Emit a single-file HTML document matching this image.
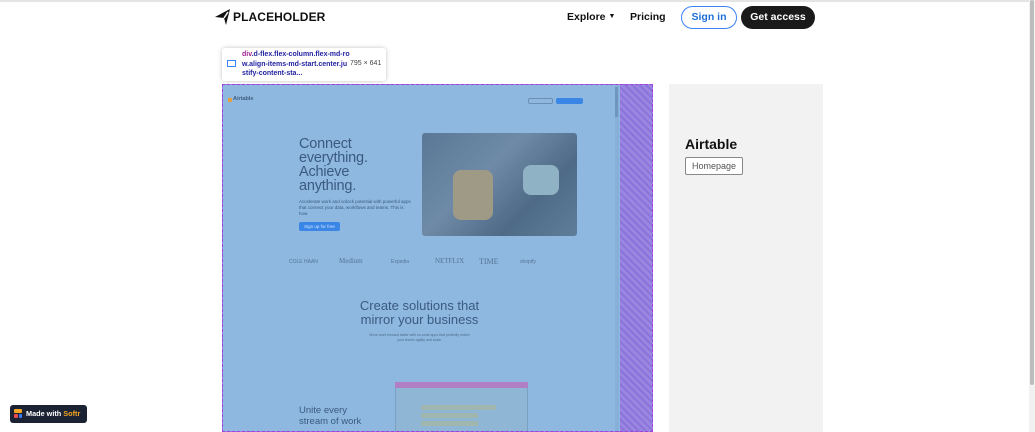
<!DOCTYPE html>
<html><head><meta charset="utf-8"><style>
*{margin:0;padding:0;box-sizing:border-box}
body{width:1035px;height:432px;overflow:hidden;background:#fff;font-family:"Liberation Sans",sans-serif;position:relative}
.abs{position:absolute}
</style></head><body>
<div class="abs" style="left:0;top:0;width:1035px;height:2px;background:#e4e4e4"></div>
<div class="abs" style="left:1029px;top:0;width:6px;height:432px;background:#f1f1f1"></div>
<div class="abs" style="left:1030px;top:0;width:4px;height:385px;background:#bdbdbd;border-radius:2px"></div>
<svg class="abs" style="left:214px;top:8px" width="18" height="18" viewBox="0 0 18 18"><path d="M16 1 L1 9 L10 10 L12 17 Z" fill="#111"/><path d="M10 10 L14 4" stroke="#fff" stroke-width="1.5"/></svg>
<div class="abs" style="left:233px;top:10px;font-size:12px;font-weight:bold;letter-spacing:0.1px;color:#111">PLACEHOLDER</div>
<div class="abs" style="left:567px;top:11px;font-size:10.5px;font-weight:bold;color:#111">Explore <span style="font-size:7px;vertical-align:2px">&#9660;</span></div>
<div class="abs" style="left:630px;top:11px;font-size:10.5px;font-weight:bold;color:#111">Pricing</div>
<div class="abs" style="left:681px;top:6px;width:56px;height:23px;border:1px solid #3b82f6;border-radius:12px;color:#1d6fd8;font-size:10.5px;font-weight:bold;text-align:center;line-height:21px">Sign in</div>
<div class="abs" style="left:741px;top:6px;width:74px;height:23px;background:#1a1a1a;border-radius:12px;color:#fff;font-size:10.5px;font-weight:bold;text-align:center;line-height:23px">Get access</div>
<div class="abs" style="left:222px;top:48px;width:164px;height:33px;background:#fff;border-radius:3px;box-shadow:0 0 4px rgba(0,0,0,.25)"></div>
<div class="abs" style="left:227px;top:60px;width:9px;height:7px;border:1px solid #3b82f6"></div>
<div class="abs" style="left:242px;top:50px;width:108px;font-size:7px;font-weight:bold;line-height:9.5px;color:#2323a0;word-break:break-all"><span style="color:#a0208f">div</span>.d-flex.flex-column.flex-md-row.align-items-md-start.center.justify-content-sta...</div>
<div class="abs" style="left:350px;top:60px;font-size:7px;color:#444">795 × 641</div>
<div class="abs" style="left:222px;top:84px;width:431px;height:348px;background:repeating-linear-gradient(45deg,#9a86e0 0 3px,#8a73da 3px 5px);border:1px dashed #a040e0;overflow:hidden">
 <div class="abs" style="left:0;top:0;width:397px;height:348px;background:#8eb8e0"></div>
 <div class="abs" style="left:392px;top:0;width:4px;height:348px;background:#86b0d8"></div>
 <div class="abs" style="left:392px;top:2px;width:3px;height:30px;background:#6f94bd"></div>
 <div class="abs" style="left:10px;top:11px;font-size:5.5px;color:#3f5e80;font-weight:bold">Airtable</div>
 <div class="abs" style="left:5px;top:13px;width:4px;height:4px;background:#e0a040"></div>
 <div class="abs" style="left:305px;top:13px;width:25px;height:6px;border:1px solid #6d8fb5;border-radius:2px"></div>
 <div class="abs" style="left:333px;top:13px;width:27px;height:6px;background:#3a86e6;border-radius:2px"></div>
 <div class="abs" style="left:76px;top:52px;font-size:14.5px;line-height:14px;color:#3b5a80;letter-spacing:-0.2px">Connect<br>everything.<br>Achieve<br>anything.</div>
 <div class="abs" style="left:76px;top:114px;width:112px;font-size:4.5px;line-height:6px;color:#3b5a80">Accelerate work and unlock potential with powerful apps that connect your data, workflows and teams. This is how.</div>
 <div class="abs" style="left:76px;top:137px;width:41px;height:9px;background:#3a86e6;border-radius:2px;font-size:4.5px;color:#cfe4ff;line-height:9px;text-align:center">Sign up for free</div>
 <div class="abs" style="left:199px;top:48px;width:155px;height:103px;border-radius:3px;background:linear-gradient(135deg,#5a7896,#6e8aa6 40%,#4e6a86 70%,#5f7e9a)"></div>
 <div class="abs" style="left:230px;top:85px;width:40px;height:50px;background:#9e9a86;border-radius:8px"></div>
 <div class="abs" style="left:300px;top:80px;width:36px;height:30px;background:#8fb2c4;border-radius:8px"></div>
 <div class="abs" style="left:0;top:168px;width:393px;height:25px;font-size:5px;color:#567496">
  <span class="abs" style="left:66px;top:6px">COLE HAAN</span><span class="abs" style="left:116px;top:4px;font-family:'Liberation Serif';font-size:7px">Medium</span><span class="abs" style="left:168px;top:6px">Expedia</span><span class="abs" style="left:212px;top:4px;font-family:'Liberation Serif';font-size:7px">NETFLIX</span><span class="abs" style="left:256px;top:4px;font-family:'Liberation Serif';font-size:8px">TIME</span><span class="abs" style="left:297px;top:6px">shopify</span>
 </div>
 <div class="abs" style="left:0;top:214px;width:393px;text-align:center;font-size:13px;line-height:14px;color:#3b5a80">Create solutions that<br>mirror your business</div>
 <div class="abs" style="left:0;top:248px;width:393px;text-align:center;font-size:3.5px;line-height:5px;color:#4e6c8e">Move work forward faster with no-code apps that perfectly match<br>your team's agility and scale.</div>
 <div class="abs" style="left:172px;top:297px;width:133px;height:51px;background:#90b6d6;border:1px solid #7aa0c4"></div>
 <div class="abs" style="left:172px;top:297px;width:133px;height:6px;background:#b07fc4"></div>
 <div class="abs" style="left:198px;top:320px;width:75px;height:5px;background:#a2b6b0"></div>
 <div class="abs" style="left:198px;top:328px;width:57px;height:5px;background:#a2b6b0"></div>
 <div class="abs" style="left:198px;top:336px;width:57px;height:5px;background:#a2b6b0"></div>
 <div class="abs" style="left:76px;top:320px;font-size:9.5px;line-height:11px;color:#3b5a80">Unite every<br>stream of work</div>
</div>
<div class="abs" style="left:669px;top:84px;width:154px;height:348px;background:#f2f2f2"></div>
<div class="abs" style="left:685px;top:136px;font-size:14px;font-weight:bold;color:#111">Airtable</div>
<div class="abs" style="left:685px;top:157px;width:58px;height:18px;border:1px solid #888;border-radius:2px;background:#fff;font-size:9px;color:#555;text-align:center;line-height:16px">Homepage</div>
<div class="abs" style="left:10px;top:405px;width:77px;height:18px;background:#1a2233;border-radius:3px"></div>
<div class="abs" style="left:14px;top:409px;width:8px;height:4px;background:#f5a524;border-radius:1px"></div>
<div class="abs" style="left:14px;top:414px;width:3.5px;height:4px;background:#e94b4b;border-radius:1px"></div>
<div class="abs" style="left:18.5px;top:414px;width:3.5px;height:4px;background:#3b7cf6;border-radius:1px"></div>
<div class="abs" style="left:26px;top:409px;font-size:7.3px;font-weight:bold;color:#fff">Made with <span style="color:#f5a524">Softr</span></div>
</body></html>
